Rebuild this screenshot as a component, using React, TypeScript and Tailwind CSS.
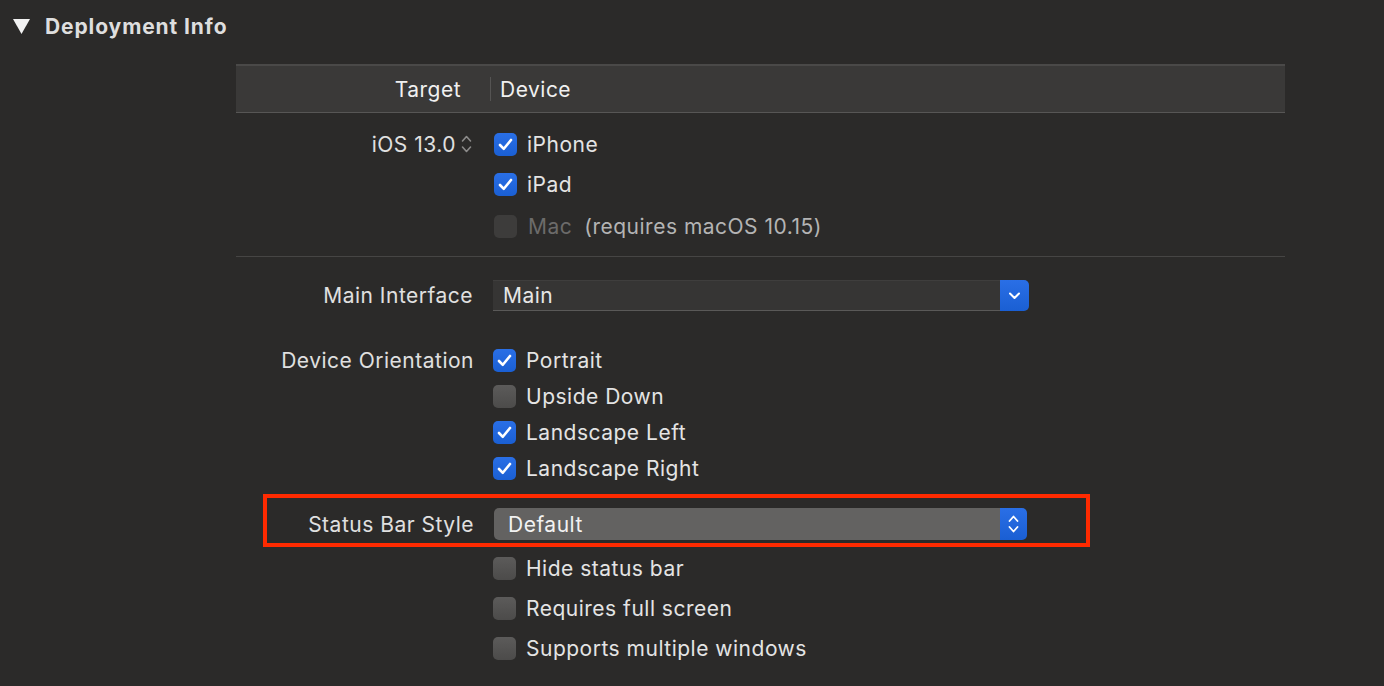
import React from 'react';

const Check = ({ checked = false, disabled = false }: { checked?: boolean; disabled?: boolean }) => {
  if (checked) {
    return (
      <div className="w-[23px] h-[23px] rounded-[5px] bg-gradient-to-b from-[#2a6fe6] to-[#1a5fd3] flex items-center justify-center shrink-0">
        <svg width="15" height="13" viewBox="0 0 15 13" fill="none">
          <path d="M2 7 L5.8 10.8 L13 2" stroke="white" strokeWidth="2.6" strokeLinecap="round" strokeLinejoin="round" />
        </svg>
      </div>
    );
  }
  return (
    <div
      className={
        disabled
          ? 'w-[23px] h-[23px] rounded-[5px] bg-[#3d3c3b] shrink-0'
          : 'w-[23px] h-[23px] rounded-[5px] bg-gradient-to-b from-[#5c5b5a] to-[#4c4b4a] shrink-0'
      }
    />
  );
};

const CheckRow = ({
  label,
  checked,
  disabled,
  extra,
  h = 'h-[40px]',
}: {
  label: string;
  checked?: boolean;
  disabled?: boolean;
  extra?: string;
  h?: string;
}) => (
  <div className={`flex items-center ${h}`}>
    <Check checked={checked} disabled={disabled} />
    <span className={disabled ? 'ml-[11px] text-[#6c6b6a]' : 'ml-[10px] text-[#e4e4e4]'}>{label}</span>
    {extra && <span className="ml-[12px] text-[#b4b4b4]">{extra}</span>}
  </div>
);

const Label = ({ children, className = '' }: { children: React.ReactNode; className?: string }) => (
  <div className={`w-[238px] shrink-0 text-right text-[#e0e0e0] ${className}`}>{children}</div>
);

export default function App() {
  return (
    <div
      className="w-full h-[686px] overflow-hidden bg-[#2b2a29] text-[21px] tracking-[0.5px] leading-none"
      style={{ fontFamily: 'Inter, "Liberation Sans", sans-serif' }}
    >
      {/* section title */}
      <div className="h-[52px] flex items-center">
        <svg className="ml-[13px]" width="17" height="15" viewBox="0 0 17 15">
          <path d="M0 0 H17 L8.5 15 Z" fill="#f2f2f2" />
        </svg>
        <span className="ml-[15px] font-bold tracking-[0.9px] text-[#dedede]">Deployment Info</span>
      </div>

      <div className="ml-[236px] w-[1049px] mt-[12px]">
        {/* table header */}
        <div className="h-[49px] flex items-center bg-[#3a3938] border-t-2 border-b border-t-[#4a4948] border-b-[#575655]">
          <div className="w-[225px] text-right text-[#f0f0f0]">Target</div>
          <div className="ml-[29px] w-px h-[24px] bg-[#555453]" />
          <div className="ml-[9px] text-[#f0f0f0]">Device</div>
        </div>

        {/* target / device */}
        <div className="flex pt-[11px]">
          <Label className="h-[40px] flex items-center justify-end">
            <span>iOS 13.0</span>
            <svg className="ml-[4px] mr-[1px]" width="13" height="20" viewBox="0 0 13 20" fill="none">
              <path d="M2.5 7 L6.5 2.5 L10.5 7" stroke="#8c8b8a" strokeWidth="1.6" strokeLinecap="round" strokeLinejoin="round" />
              <path d="M2.5 13 L6.5 17.5 L10.5 13" stroke="#8c8b8a" strokeWidth="1.6" strokeLinecap="round" strokeLinejoin="round" />
            </svg>
          </Label>
          <div className="ml-[20px]">
            <CheckRow label="iPhone" checked />
            <CheckRow label="iPad" checked />
            <div className="mt-[2px]">
              <CheckRow label="Mac" disabled extra="(requires macOS 10.15)" />
            </div>
          </div>
        </div>

        <div className="mt-[10px] h-px bg-[#464544]" />

        {/* main interface */}
        <div className="flex items-center mt-[23px] h-[31px]">
          <Label className="pr-[1px]">Main Interface</Label>
          <div className="ml-[19px] w-[536px] h-[31px] flex items-stretch">
            <div className="flex-1 flex items-center bg-[#363534] border-t border-t-[#3f3e3d] border-b border-b-[#5a5958] pl-[10px] text-[#e6e6e6]">
              Main
            </div>
            <div className="w-[29px] rounded-r-[5px] bg-gradient-to-b from-[#2a6fe6] to-[#1a5fd3] flex items-center justify-center">
              <svg width="13" height="9" viewBox="0 0 13 9" fill="none">
                <path d="M2 2.5 L6.5 7 L11 2.5" stroke="white" strokeWidth="2" strokeLinecap="round" strokeLinejoin="round" />
              </svg>
            </div>
          </div>
        </div>

        {/* device orientation */}
        <div className="flex mt-[31px]">
          <Label className="h-[36px] flex items-center justify-end">Device Orientation</Label>
          <div className="ml-[19px]">
            <CheckRow h="h-[36px]" label="Portrait" checked />
            <CheckRow h="h-[36px]" label="Upside Down" />
            <CheckRow h="h-[36px]" label="Landscape Left" checked />
            <CheckRow h="h-[36px]" label="Landscape Right" checked />
          </div>
        </div>

        {/* status bar style */}
        <div className="relative flex items-center mt-[22px] h-[32px]">
          <Label>Status Bar Style</Label>
          <div className="ml-[20px] w-[533px] h-[32px] flex rounded-[5px] overflow-hidden">
            <div className="flex-1 flex items-center bg-[#636261] pl-[14px] text-[#f2f2f2]">Default</div>
            <div className="w-[27px] bg-gradient-to-b from-[#2a6fe6] to-[#1a5fd3] flex items-center justify-center">
              <svg width="13" height="22" viewBox="0 0 13 22" fill="none">
                <path d="M2.5 8 L6.5 3.5 L10.5 8" stroke="white" strokeWidth="1.8" strokeLinecap="round" strokeLinejoin="round" />
                <path d="M2.5 14 L6.5 18.5 L10.5 14" stroke="white" strokeWidth="1.8" strokeLinecap="round" strokeLinejoin="round" />
              </svg>
            </div>
          </div>
          <div className="absolute left-[27px] top-[-14px] w-[827px] h-[53px] border-4 border-[#ff2a00] pointer-events-none" />
        </div>

        {/* status bar options */}
        <div className="ml-[257px] mt-[8px]">
          <CheckRow label="Hide status bar" />
          <CheckRow label="Requires full screen" />
          <CheckRow label="Supports multiple windows" />
        </div>
      </div>
    </div>
  );
}
